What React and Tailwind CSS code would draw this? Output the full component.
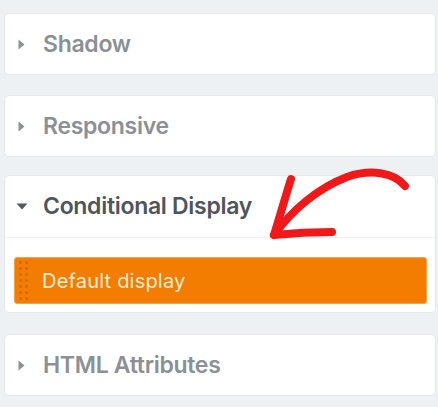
const font = { fontFamily: "Inter, 'Noto Sans', sans-serif" };

function Caret({ open }) {
  if (open) {
    return (
      <svg width="12" height="7" viewBox="0 0 12 7" className="shrink-0">
        <path d="M0.5 0.5 L11.5 0.5 L6 6.5 Z" fill="#54585f" />
      </svg>
    );
  }
  return (
    <svg width="7" height="11" viewBox="0 0 7 11" className="shrink-0">
      <path d="M0.5 0.5 L6.5 5.5 L0.5 10.5 Z" fill="#8d9197" />
    </svg>
  );
}

function Section({ title, open, className, children }) {
  return (
    <div className={"bg-white rounded-[5px] border border-[#e7eaed] " + (className || "")}>
      <div className={(open ? "h-[61px]" : "h-[60px]") + " flex items-center pl-[13px]"}>
        <div className={open ? "w-[12px] -ml-[2px] mr-[15px] flex" : "w-[7px] mr-[18px] flex"}>
          <Caret open={open} />
        </div>
        <span
          className={
            open
              ? "text-[23px] font-semibold text-[#50545b] tracking-[-0.3px]"
              : "text-[23px] font-semibold text-[#8b9097] tracking-[-0.3px]"
          }
        >
          {title}
        </span>
      </div>
      {children}
    </div>
  );
}

function DragDots() {
  return (
    <div className="grid grid-cols-2 gap-x-[3px] gap-y-[3px] py-[3px]">
      {Array.from({ length: 14 }).map((_, i) => (
        <span key={i} className="w-[3px] h-[3px] rounded-full bg-[#d96900]" />
      ))}
    </div>
  );
}

export default function App() {
  return (
    <div className="w-[438px] h-[407px] bg-[#eef1f3] overflow-hidden relative" style={font}>
      <div className="pt-[13px] pl-[4px] w-[436px] flex flex-col">
        <Section title="Shadow" />
        <Section title="Responsive" className="mt-[20px]" />
        <Section title="Conditional Display" open className="mt-[18px]">
          <div className="border-t border-[#eef0f2] pt-[19px] pb-[8px] pl-[9px] pr-[8px]">
            <div className="h-[47px] bg-[#f27d00] rounded-[3px] flex items-center pl-[4px] border border-[#f5a24a]">
              <DragDots />
              <span className="ml-[14px] text-[20px] text-[#fdebd6] tracking-[0.2px]">Default display</span>
            </div>
          </div>
        </Section>
        <Section title="HTML Attributes" className="mt-[21px]" />
      </div>
      <svg
        className="absolute left-0 top-0 pointer-events-none"
        width="438"
        height="407"
        viewBox="0 0 438 407"
      >
        <path
          d="M405 186 C394 172 370 169 347 177 C318 188 292 210 274 235"
          fill="none"
          stroke="#f01818"
          strokeWidth="8"
          strokeLinecap="round"
        />
        <path
          d="M291 179 C285 198 280 216 274 235 C293 233 313 232 332 232"
          fill="none"
          stroke="#f01818"
          strokeWidth="8"
          strokeLinecap="round"
          strokeLinejoin="round"
        />
      </svg>
    </div>
  );
}
